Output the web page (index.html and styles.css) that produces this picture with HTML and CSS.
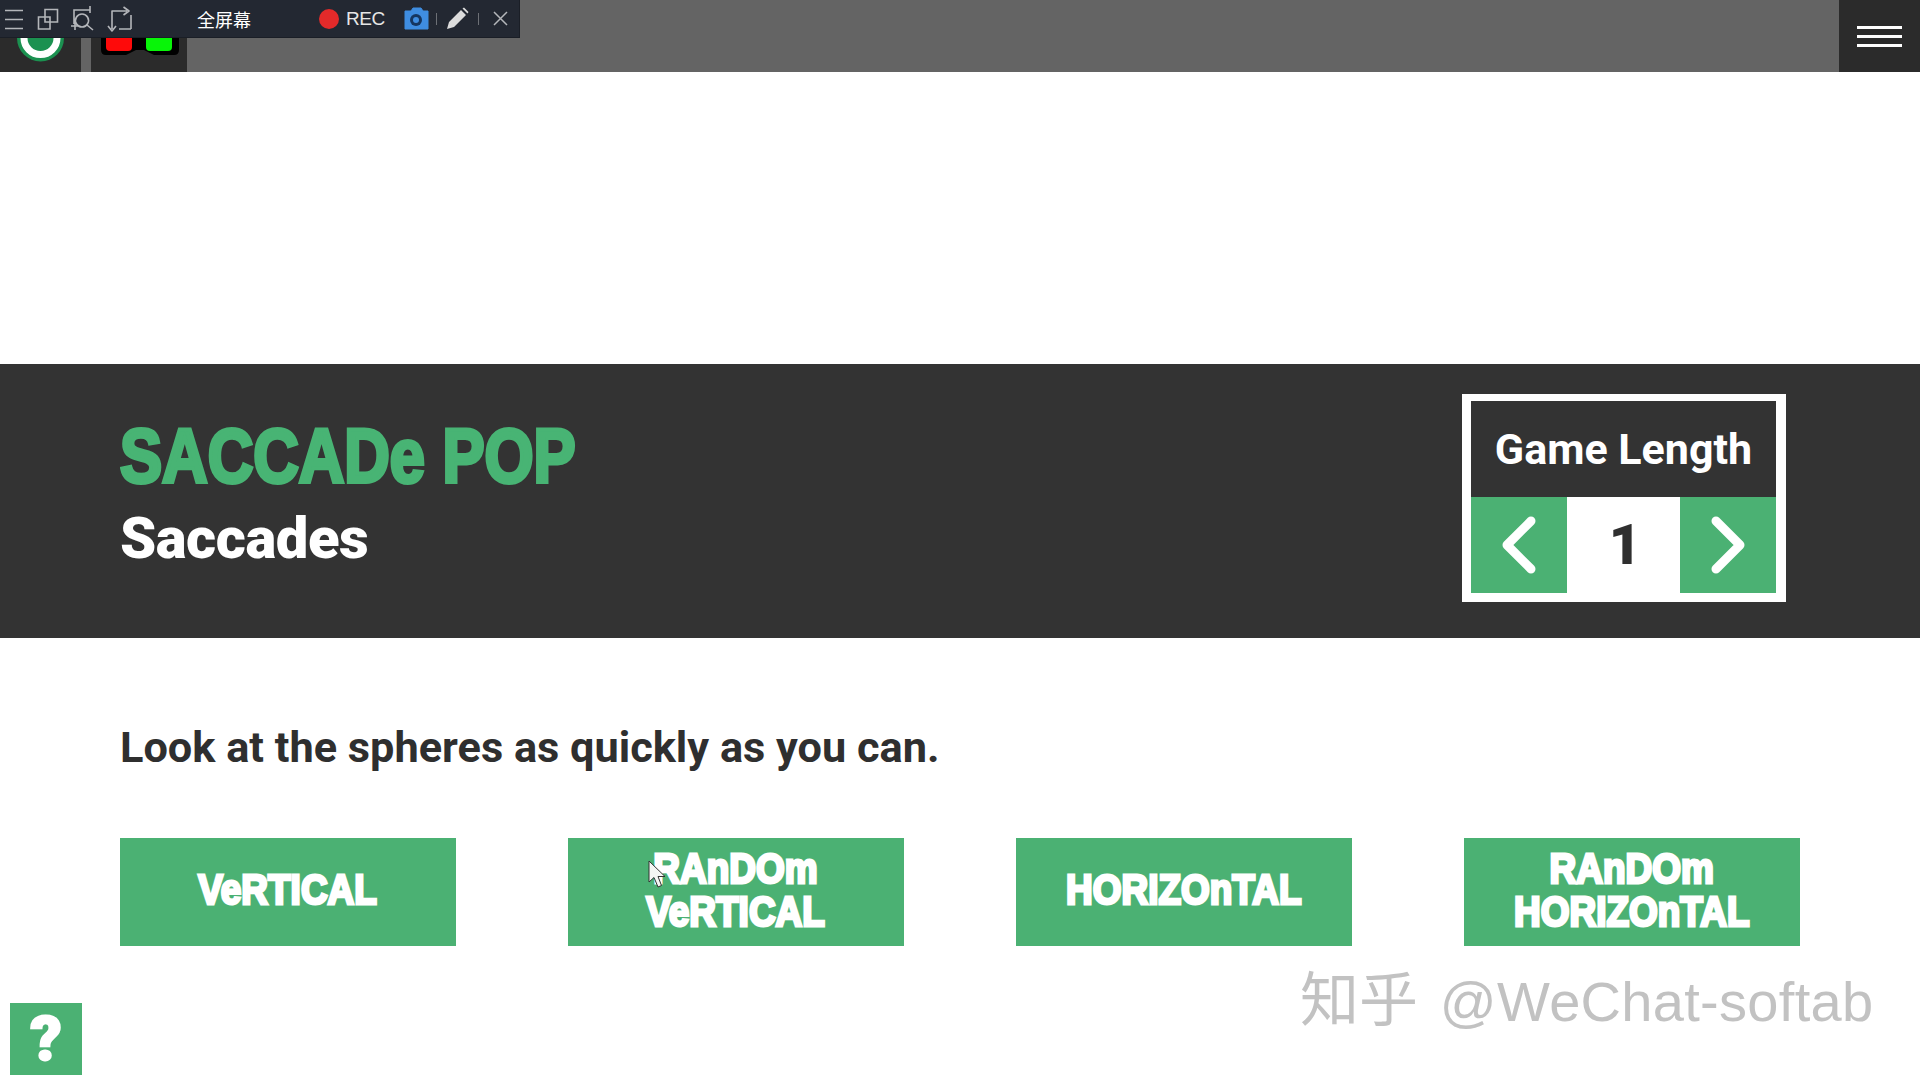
FILE: index.html
```html
<!DOCTYPE html>
<html lang="en">
<head>
<meta charset="utf-8">
<title>Saccade Pop</title>
<link rel="stylesheet" href="styles.css">
</head>
<body>
<header class="topbar">
  <div class="logo-box">
    <svg class="logo" width="81" height="72" viewBox="0 0 81 72"><circle cx="40.5" cy="38" r="23.5" fill="#1b9150"/><circle cx="40.5" cy="38" r="16.5" fill="none" stroke="#fff" stroke-width="7"/></svg>
  </div>
  <div class="glasses-box">
    <svg width="96" height="72" viewBox="0 0 96 72"><path d="M10 30H88V50Q88 55 83 55H63L53 50H45L35 55H15Q10 55 10 50Z" fill="#000"/><path d="M15 30H41V47Q41 51 37 51H19Q15 51 15 47Z" fill="#fe0a0a"/><path d="M55 30H81V47Q81 51 77 51H59Q55 51 55 47Z" fill="#08f508"/></svg>
  </div>
  <div class="top-spacer"></div>
  <button class="menu-btn" aria-label="Menu"><span></span><span></span><span></span></button>
</header>

<div class="rec-toolbar">
  <svg class="tb-icon" width="150" height="37" viewBox="0 0 150 37" fill="none" stroke="#b4b6ba" stroke-width="1.6">
    <path d="M5 10.500H23M5 19.500H23M5 28.500H23"/>
    <path d="M38.500 17H50V29H38.500ZM45 17V9.500H57.500V22H50M38.500 17H45M45 17V22H50"/>
    <path d="M74 24V10H90M82 14a6.500 6.500 0 1 0 .01 0ZM87 25L93 30M71 26H79M75 22V30M90 6V13" />
    <path d="M112 29V11H127M123.500 7L129 11L123.500 15M108 26L112 31L116 26M119 29H131M131 15V29" stroke-linejoin="round"/>
  </svg>
  <span class="tb-label">全屏幕</span>
  <span class="rec-dot"></span>
  <span class="rec-label">REC</span>
  <svg class="tb-camera" width="25" height="23" viewBox="0 0 25 23"><path d="M1 4H7L9 1H17L19 4H24V22H1Z" fill="#3f8de0" stroke="#3f8de0" stroke-linejoin="round"/><circle cx="12" cy="13" r="6" fill="#16365f"/><circle cx="12" cy="13" r="3" fill="#3f8de0"/></svg>
  <i class="tb-sep"></i>
  <svg class="tb-pencil" width="23" height="23" viewBox="0 0 23 23"><path d="M1 22L3 15L15 3L20 8L8 20ZM16.500 1.500L18 0.500L22.500 5L21.500 6.500Z" fill="#dcdcdc"/></svg>
  <i class="tb-sep"></i>
  <svg class="tb-close" width="15" height="15" viewBox="0 0 15 15"><path d="M1 1L14 14M14 1L1 14" stroke="#b4b6ba" stroke-width="1.5"/></svg>
</div>

<main>
  <section class="hero">
    <div class="hero-text">
      <h1 class="game-title">SACCADe POP</h1>
      <h2 class="game-type">Saccades</h2>
    </div>
    <div class="length-box">
      <div class="length-head">Game Length</div>
      <div class="length-row">
        <button class="arrow" aria-label="Less"><svg width="40" height="58" viewBox="0 0 40 58"><path d="M32 5L8 29L32 53" fill="none" stroke="#fff" stroke-width="9" stroke-linecap="round" stroke-linejoin="round"/></svg></button>
        <div class="length-value">1</div>
        <button class="arrow" aria-label="More"><svg width="40" height="58" viewBox="0 0 40 58"><path d="M8 5L32 29L8 53" fill="none" stroke="#fff" stroke-width="9" stroke-linecap="round" stroke-linejoin="round"/></svg></button>
      </div>
    </div>
  </section>

  <section class="content">
    <p class="lead">Look at the spheres as quickly as you can.</p>
    <div class="modes">
      <button class="mode"><span class="mode-text">VeRTICAL</span></button>
      <button class="mode"><span class="mode-text">RAnDOm<br>VeRTICAL</span></button>
      <button class="mode"><span class="mode-text">HORIZOnTAL</span></button>
      <button class="mode"><span class="mode-text">RAnDOm<br>HORIZOnTAL</span></button>
    </div>
  </section>
</main>

<button class="help" aria-label="Help">?</button>
<div class="watermark"><span class="wm-cn">知乎</span> @WeChat-softab</div>
<svg class="cursor" width="20" height="30" viewBox="0 0 20 30"><path d="M1 1V22L6 17.500L10 27L13.500 25.500L10 16.500H17Z" fill="#f4f6f4" stroke="#333" stroke-width="1"/></svg>
</body>
</html>
```
FILE: styles.css
```css
* { box-sizing: border-box; }
html, body { margin: 0; height: 1080px; overflow: hidden; }
body { background: #fff; font-family: Roboto, "Liberation Sans", sans-serif; color: #2f2f2f; }
button { border: 0; padding: 0; font: inherit; cursor: pointer; }

.topbar { display: flex; height: 72px; background: #646464; }
.logo-box { width: 81px; background: #2b2b2b; }
.glasses-box { width: 96px; margin-left: 10px; background: #2b2b2b; }
.logo, .glasses-box svg { display: block; }
.top-spacer { flex: 1; }
.menu-btn { width: 81px; background: #2b2b2b; display: flex; flex-direction: column; justify-content: center; align-items: center; gap: 6px; }
.menu-btn span { display: block; width: 45px; height: 3px; background: #fff; }

.rec-toolbar { position: absolute; left: 0; top: 0; width: 520px; height: 38px; background: #232832; display: flex; align-items: center; border-right: 1px solid #1a1e26; border-bottom: 1px solid #1a1e26; }
.tb-icon { flex: none; }
.tb-label { margin-left: 47px; width: 122px; font: 18px "Noto Sans CJK SC", sans-serif; color: #fff; }
.rec-dot { width: 20px; height: 20px; border-radius: 50%; background: #e32a2a; }
.rec-label { margin-left: 7px; font: 19px "Liberation Sans", sans-serif; color: #e6e6e6; letter-spacing: -0.5px; width: 58px; }
.tb-sep { width: 1px; height: 12px; background: #6d7076; }
.tb-camera { margin-right: 7px; }
.tb-pencil { margin: 0 9px; }
.tb-close { margin-left: 14px; }

.hero { margin-top: 292px; height: 274px; background: #333; display: flex; justify-content: space-between; align-items: flex-start; padding: 30px 134px 0 120px; }
.game-title { margin: 24px 0 0; font: 700 76px/1 "Liberation Sans", sans-serif; color: #48b474; -webkit-text-stroke: 4px #48b474; transform: scaleX(0.83); transform-origin: left center; white-space: nowrap; }
.game-type { margin: 10px 0 0; font: 900 58px/1.2 Roboto, sans-serif; color: #fff; letter-spacing: -0.5px; }

.length-box { width: 324px; height: 208px; border: solid #fff; border-width: 7px 10px 9px 9px; background: #333; display: flex; flex-direction: column; }
.length-head { height: 96px; display: flex; align-items: center; justify-content: center; font: 700 43px Roboto, sans-serif; color: #fff; }
.length-row { flex: 1; display: flex; background: #fff; }
.arrow { width: 96px; background: #4bb173; display: flex; align-items: center; justify-content: center; }
.length-value { flex: 1; display: flex; align-items: center; justify-content: center; padding-left: 3px; font: 900 56px Roboto, sans-serif; color: #2f2f2f; }

.content { padding: 0 120px; }
.lead { margin: 0; padding-top: 84px; font: 700 43.300px/1.2 Roboto, sans-serif; color: #2f2f2f; }
.modes { margin-top: 64px; display: flex; justify-content: space-between; }
.mode { width: 336px; height: 108px; background: #4bb173; color: #fff; font-family: "Liberation Sans", sans-serif; font-weight: 700; font-size: 42px; line-height: 43px; -webkit-text-stroke: 3px #fff; text-align: center; }
.mode-text { display: inline-block; transform: translateY(-2px) scaleX(0.88); white-space: nowrap; }

.help { position: absolute; left: 10px; top: 1003px; width: 72px; height: 72px; background: #4bb173; color: #fff; font: 900 62px/72px Roboto, sans-serif; -webkit-text-stroke: 2px #fff; text-align: center; }
.watermark { position: absolute; left: 1300px; top: 961px; font: 400 56px/1.2 "Liberation Sans", sans-serif; letter-spacing: 0.3px; color: #c2c2c2; white-space: nowrap; }
.wm-cn { font-family: "Noto Sans CJK SC", sans-serif; font-size: 59px; letter-spacing: 0; margin-right: 6px; }
.cursor { position: absolute; left: 648px; top: 860px; }
```
